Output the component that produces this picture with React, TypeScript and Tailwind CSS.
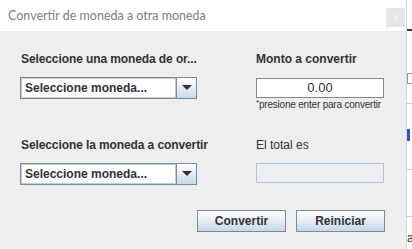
import React from "react";

const ff = { fontFamily: '"Liberation Sans", Arial, sans-serif' };

function Combo() {
  return (
    <div className="flex h-[22px] w-[177px] border border-[#7a8a99] bg-white">
      <div className="flex flex-1 items-center whitespace-nowrap border border-[#b8cfe5] pl-[3px] text-[12px] font-bold text-[#333333]">
        Seleccione moneda...
      </div>
      <div className="flex w-[20px] items-center justify-center border-l border-[#7a8a99] bg-gradient-to-b from-white to-[#c8d8ea]">
        <svg width="10" height="6" viewBox="0 0 10 6">
          <polygon points="0,0 10,0 5,5" fill="#333333" />
        </svg>
      </div>
    </div>
  );
}

function Btn({ label }: { label: string }) {
  return (
    <div className="flex h-[22px] w-[89px] items-center justify-center border border-[#7a8a99] bg-gradient-to-b from-white to-[#c6d7ea] text-[12px] font-bold text-[#333333]">
      {label}
    </div>
  );
}

export default function App() {
  return (
    <div className="flex h-[249px] w-[412px] overflow-hidden bg-white" style={ff}>
      <div className="flex w-[406px] flex-col">
        <div className="flex h-[31px] items-start justify-between bg-white pl-[8px] pr-[1px]">
          <span
            className="mt-[7px] whitespace-nowrap text-[12.5px] leading-[17px] text-[#808080]"
            style={{ fontFamily: 'Lato, "Noto Sans", sans-serif' }}
          >
            Convertir de moneda a otra moneda
          </span>
          <div className="mt-[8px] flex h-[19px] w-[19px] items-center justify-center bg-[#e5e5e5] text-[11px] leading-none text-[#f7f7f7]">
            x
          </div>
        </div>
        <div className="flex flex-1 flex-col bg-[#eeeeee] pl-[20px] pt-[21px]">
          <div className="flex h-[86px]">
            <div className="flex w-[177px] flex-col">
              <div className="h-[14px] whitespace-nowrap pl-[1px] text-[12px] font-bold leading-[14px] tracking-[-0.1px] text-[#333333]">
                Seleccione una moneda de or...
              </div>
              <div className="mt-[11px]">
                <Combo />
              </div>
            </div>
            <div className="ml-[59px] flex w-[128px] flex-col">
              <div className="h-[14px] whitespace-nowrap text-[12px] font-bold leading-[14px] text-[#333333]">
                Monto a convertir
              </div>
              <div className="mt-[12px] flex h-[20px] items-center justify-center border border-[#7a8a99] bg-white text-[13px] text-[#333333]">
                0.00
              </div>
              <div className="mt-[1px] h-[12px] whitespace-nowrap text-[10px] leading-[12px] tracking-[-0.2px] text-[#333333]">
                <span className="relative -top-[3px] text-[8px]">*</span>presione enter para convertir
              </div>
            </div>
          </div>
          <div className="flex h-[72px]">
            <div className="flex w-[177px] flex-col">
              <div className="h-[14px] whitespace-nowrap pl-[1px] text-[12px] font-bold leading-[14px] tracking-[-0.1px] text-[#333333]">
                Seleccione la moneda a convertir
              </div>
              <div className="mt-[11px]">
                <Combo />
              </div>
            </div>
            <div className="ml-[59px] flex w-[128px] flex-col">
              <div className="h-[14px] whitespace-nowrap text-[12px] leading-[14px] text-[#333333]">El total es</div>
              <div className="mt-[11px] h-[20px] border border-[#a8c6e3] bg-[#eeeeee]" />
            </div>
          </div>
          <div className="ml-[177px] flex gap-[10px]">
            <Btn label="Convertir" />
            <Btn label="Reiniciar" />
          </div>
        </div>
      </div>
      <div className="flex w-[6px] flex-col overflow-hidden border-l border-[#d8d8d8] bg-white">
        <div className="mt-[29px] h-[2px] w-[5px] bg-[#333366]" />
        <div className="mt-[42px] h-[11px] w-[5px] border-y border-l border-[#999999]" />
        <div className="mt-[19px] h-px w-[5px] bg-[#cccccc]" />
        <div className="mt-[25px] h-[12px] w-[3px] bg-[#3355cc]" />
        <div className="mt-[28px] h-px w-[5px] bg-[#cccccc]" />
        <div className="mt-[46px] h-px w-[5px] bg-[#cccccc]" />
        <div className="mt-[15px] h-[12px] text-[12px] leading-[12px] text-[#333333]">a</div>
      </div>
    </div>
  );
}
